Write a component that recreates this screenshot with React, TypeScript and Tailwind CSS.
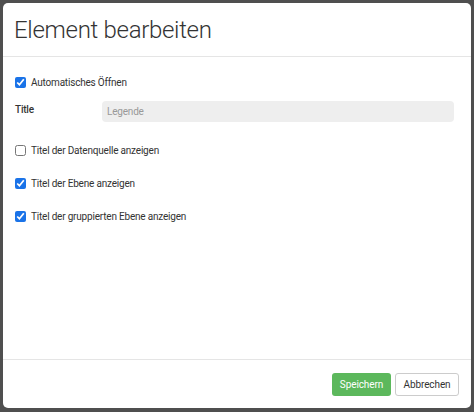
import { useState } from 'react';

type Option = { id: string; label: string; checked: boolean };

const initialOptions: Option[] = [
  { id: 'source', label: 'Titel der Datenquelle anzeigen', checked: false },
  { id: 'layer', label: 'Titel der Ebene anzeigen', checked: true },
  { id: 'group', label: 'Titel der gruppierten Ebene anzeigen', checked: true },
];

function Check({ checked, onChange }: { checked: boolean; onChange: () => void }) {
  return (
    <input
      type="checkbox"
      checked={checked}
      onChange={onChange}
      className="m-0 h-[11px] w-[11px] accent-[#1a73e8]"
    />
  );
}

export default function App() {
  const [autoOpen, setAutoOpen] = useState(true);
  const [options, setOptions] = useState(initialOptions);

  const toggle = (id: string) =>
    setOptions(opts => opts.map(o => (o.id === id ? { ...o, checked: !o.checked } : o)));

  return (
    <div className="h-[412px] w-[474px] overflow-hidden bg-[#4f4f4f] pt-[3px] font-['Roboto',sans-serif] text-[#333]">
      <div className="mx-[3px] flex h-[405px] flex-col rounded-[5px] bg-white">
        <div className="flex h-[54px] items-center border-b border-[#e5e5e5] pl-[11px]">
          <h1 className="text-[24px] font-light leading-none tracking-[-0.3px]">Element bearbeiten</h1>
        </div>

        <div className="flex flex-1 flex-col pl-[12px] pr-[17px] text-[10px] tracking-[-0.2px]">
          <label className="mt-[18px] flex h-[14px] items-center gap-[5px]">
            <Check checked={autoOpen} onChange={() => setAutoOpen(!autoOpen)} />
            <span>Automatisches Öffnen</span>
          </label>

          <div className="mt-[12px] flex h-[21px] items-start">
            <span className="mt-[1px] w-[87px] font-medium">Title</span>
            <input
              placeholder="Legende"
              className="h-[21px] flex-1 rounded-[4px] bg-[#eeeeee] px-[5px] placeholder:text-[#999] outline-none"
            />
          </div>

          <div className="mt-[21px] flex flex-col gap-[19px]">
            {options.map(o => (
              <label key={o.id} className="flex h-[14px] items-center gap-[5px]">
                <Check checked={o.checked} onChange={() => toggle(o.id)} />
                <span>{o.label}</span>
              </label>
            ))}
          </div>
        </div>

        <div className="flex h-[49px] items-center justify-end gap-[4px] border-t border-[#e5e5e5] pr-[12px] text-[10px] tracking-[-0.1px]">
          <button className="h-[23px] w-[59px] rounded-[3px] bg-[#5cb85c] text-white">
            Speichern
          </button>
          <button className="h-[23px] w-[64px] rounded-[3px] border border-[#ccc] bg-white text-[#333]">
            Abbrechen
          </button>
        </div>
      </div>
    </div>
  );
}
